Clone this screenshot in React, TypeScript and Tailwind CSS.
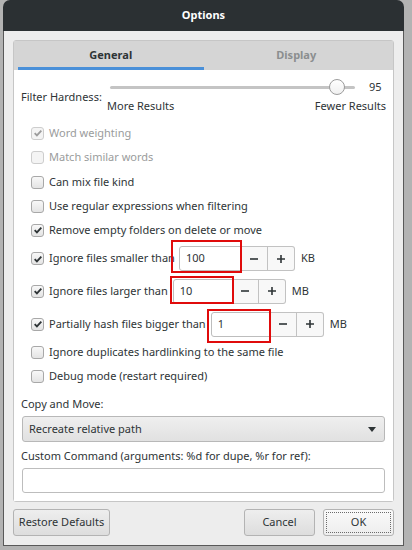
import React from "react";

const Check = ({ checked, disabled }: { checked?: boolean; disabled?: boolean }) => (
  <span
    className={`w-[13px] h-[13px] shrink-0 mr-[5px] rounded-[3px] border flex items-center justify-center ${
      disabled ? "border-[#cdcdcd] bg-[#f4f4f4]" : "border-[#a8a8a8] bg-linear-to-b from-[#f8f8f8] to-[#e4e4e4]"
    }`}
  >
    {checked && (
      <svg viewBox="0 0 12 12" className="w-[10px] h-[10px]">
        <path d="M2 6.2 L4.7 8.8 L10 3.2" fill="none" stroke={disabled ? "#9c9c9c" : "#2e3436"} strokeWidth="2.2" />
      </svg>
    )}
  </span>
);

const Row = ({
  label,
  checked,
  disabled,
  h,
  children,
}: {
  label: string;
  checked?: boolean;
  disabled?: boolean;
  h: string;
  children?: React.ReactNode;
}) => (
  <div className={`flex items-center ml-[10px] ${h}`}>
    <Check checked={checked} disabled={disabled} />
    <span className={disabled ? "text-[#9a9c9c]" : ""}>{label}</span>
    {children}
  </div>
);

const Spin = ({ value, unit, inputW, red, gap }: { value: string; unit: string; inputW: string; red: string; gap: string }) => (
  <div className={`flex items-center ${gap}`}>
    <div className="relative">
      <div className={`h-[25px] ${inputW} bg-white border border-[#bdbdbd] rounded-l-[3px] flex items-center pl-[6px]`}>
        {value}
      </div>
      <div className={`absolute border-2 border-[#e00b0b] ${red}`} />
    </div>
    <div className="h-[25px] w-[26px] border-y border-r border-[#c2c2c2] bg-[#f8f8f8] flex items-center justify-center">
      <svg viewBox="0 0 10 10" className="w-[10px] h-[10px]">
        <path d="M1 5 H9" stroke="#2e3436" strokeWidth="1.6" />
      </svg>
    </div>
    <div className="h-[25px] w-[27px] border-y border-r border-[#c2c2c2] bg-[#f8f8f8] rounded-r-[3px] flex items-center justify-center">
      <svg viewBox="0 0 10 10" className="w-[10px] h-[10px]">
        <path d="M1 5 H9 M5 1 V9" stroke="#2e3436" strokeWidth="1.6" />
      </svg>
    </div>
    <span className="ml-[6px]">{unit}</span>
  </div>
);

const Button = ({ label, w, focused }: { label: string; w: string; focused?: boolean }) => (
  <div
    className={`h-[27px] ${w} rounded-[3px] border border-[#b3b3b3] flex items-center justify-center p-[2px] ${
      focused ? "bg-linear-to-b from-[#fafafa] to-[#ededed]" : "bg-linear-to-b from-[#eeeeee] to-[#dddddd]"
    }`}
  >
    <div
      className={`w-full h-full flex items-center justify-center ${
        focused ? "border border-dotted border-[#6b6b6b]" : ""
      }`}
    >
      {label}
    </div>
  </div>
);

export default function App() {
  return (
    <div className="w-[412px] h-[550px] bg-[#b3b3b3] overflow-hidden font-['Noto_Sans',sans-serif] text-[11px] text-[#2e3436]">
      <div className="ml-[3px] w-[401px] h-[546px] flex flex-col">
        <div className="h-[31px] shrink-0 rounded-t-[7px] bg-[#2b3033] flex items-center justify-center text-white font-bold text-[11px]">
          Options
        </div>
        <div className="flex-1 bg-[#ededed] border-x border-b border-[#595959] px-[9px] pt-[9px] pb-[9px] flex flex-col">
          <div className="border border-[#c6c6c6] rounded-[3px] flex flex-col">
            <div className="h-[29px] bg-[#d5d5d5] flex px-[4px] font-bold">
              <div className="flex-1 flex items-center justify-center border-b-[3px] border-[#4a90d9] pt-[3px]">General</div>
              <div className="flex-1 flex items-center justify-center border-b-[3px] border-transparent pt-[3px] text-[#8b8e8f]">
                Display
              </div>
            </div>
            <div className="h-[431px] bg-white px-[7px] pt-[9px] pb-[8px] flex flex-col">
              <div className="flex">
                <div className="w-[86px] pt-[10px] leading-[16px]">Filter Hardness:</div>
                <div className="flex-1 flex flex-col">
                  <div className="h-[17px] flex items-center">
                    <div className="relative ml-[3px] w-[245px] h-[3px] rounded-full bg-[#c4c4c4]">
                      <div className="absolute left-[219px] -top-[7px] w-[16px] h-[16px] rounded-full border border-[#9c9c9c] bg-linear-to-b from-white to-[#f0f0f0]" />
                    </div>
                    <span className="ml-[14px]">95</span>
                  </div>
                  <div className="h-[16px] mt-[2px] flex items-center justify-between">
                    <span>More Results</span>
                    <span>Fewer Results</span>
                  </div>
                </div>
              </div>
              <div className="mt-[7px] flex flex-col">
                <Row label="Word weighting" checked disabled h="h-[24px]" />
                <Row label="Match similar words" disabled h="h-[25px]" />
                <Row label="Can mix file kind" h="h-[24px]" />
                <Row label="Use regular expressions when filtering" h="h-[24px]" />
                <Row label="Remove empty folders on delete or move" checked h="h-[24px]" />
                <Row label="Ignore files smaller than" checked h="h-[33px]">
                  <Spin value="100" unit="KB" inputW="w-[63px]" gap="ml-[4px]" red="-left-[8px] -top-[6px] w-[71px] h-[33px]" />
                </Row>
                <Row label="Ignore files larger than" checked h="h-[32px]">
                  <Spin value="10" unit="MB" inputW="w-[60px]" gap="ml-[5px]" red="-left-[3px] -top-[3px] w-[64px] h-[28px]" />
                </Row>
                <Row label="Partially hash files bigger than" checked h="h-[34px]">
                  <Spin value="1" unit="MB" inputW="w-[60px]" gap="ml-[5px]" red="-left-[4px] -top-[3px] w-[64px] h-[34px]" />
                </Row>
                <Row label="Ignore duplicates hardlinking to the same file" h="h-[23px]" />
                <Row label="Debug mode (restart required)" h="h-[25px]" />
              </div>
              <div className="mt-[5px] h-[20px] flex items-center">Copy and Move:</div>
              <div className="mt-[2px] mx-[1px] h-[26px] rounded-[3px] border border-[#b8b8b8] bg-linear-to-b from-[#efefef] to-[#e1e1e1] flex items-center justify-between pl-[6px] pr-[8px]">
                <span>Recreate relative path</span>
                <svg viewBox="0 0 8 5" className="w-[8px] h-[5px]">
                  <path d="M0 0 H8 L4 5 Z" fill="#2e3436" />
                </svg>
              </div>
              <div className="mt-[4px] h-[20px] flex items-center">Custom Command (arguments: %d for dupe, %r for ref):</div>
              <div className="mt-[2px] mx-[1px] h-[25px] rounded-[3px] border border-[#bdbdbd] bg-white" />
            </div>
          </div>
          <div className="mt-[7px] flex">
            <Button label="Restore Defaults" w="w-[97px]" />
            <div className="flex-1" />
            <Button label="Cancel" w="w-[71px]" />
            <div className="w-[8px]" />
            <Button label="OK" w="w-[71px]" focused />
          </div>
        </div>
      </div>
    </div>
  );
}
